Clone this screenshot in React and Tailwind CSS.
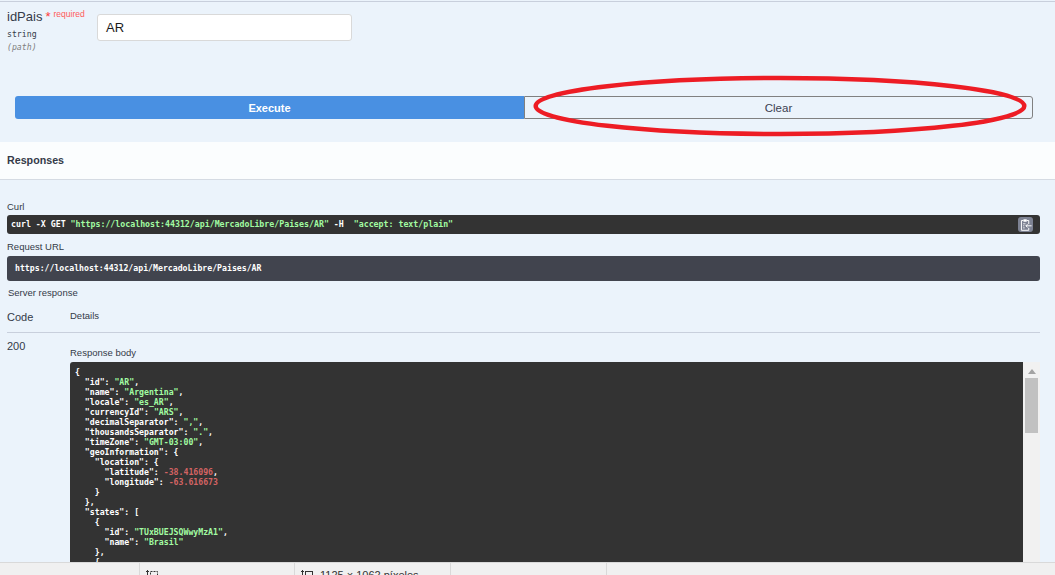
const mono = "font-['DejaVu_Sans_Mono','Liberation_Mono',monospace]";

const Str = ({ children }) => <span className="text-[#a2fca2]">{children}</span>;
const Num = ({ children }) => <span className="text-[#d36363]">{children}</span>;

const ClipboardIcon = () => (
  <svg width="13" height="14" viewBox="0 0 16 16" fill="none" stroke="#ffffff" strokeWidth="1.2">
    <path d="M5.5 2.5H3v12h9v-3" />
    <path d="M12 7V2.5H9.5" />
    <rect x="5.5" y="1" width="4" height="3" fill="#ffffff" stroke="none" />
    <path d="M15.5 9H8.5M10.5 7L8.5 9l2 2" />
    <path d="M5 6.5h3M5 9h1.5M5 11.5h2" strokeWidth="1" />
  </svg>
);

const App = () => {
  return (
    <div className="relative flex h-[575px] w-[1055px] flex-col overflow-hidden bg-[#ebf3fb] font-['Liberation_Sans',Arial,sans-serif] text-[#343a48]">
      {/* parameter row */}
      <div className="mt-px h-[95px] border-t border-[#c8cfdc] pl-[7px] pt-[7px]">
        <div className="flex">
          <div className="w-[90px]">
            <div className="flex items-start text-[13px] leading-[16px]">
              idPais
              <span className="ml-[3px] text-[#ff3b3b]">*</span>
              <span className="ml-[3px] text-[8.5px] leading-[10px] text-[#ff5a5a]">required</span>
            </div>
            <div className={`${mono} mt-[3px] text-[8.2px] leading-[13px]`}>string</div>
            <div className={`${mono} text-[8.2px] leading-[13px] text-[#808080] italic`}>(path)</div>
          </div>
          <div className="mt-[5px] flex h-[27px] w-[255px] items-center rounded-[3px] border border-[#d9d9d9] bg-white pl-2 text-[13px] text-[#1b1b1b]">
            AR
          </div>
        </div>
      </div>

      {/* execute / clear */}
      <div className="flex h-[23px] pl-[15px] pr-[22px]">
        <button className="w-[509px] rounded-l-[3px] bg-[#4990e2] pt-px text-[11px] font-bold text-white">Execute</button>
        <button className="flex-1 rounded-r-[3px] border border-[#808080] pt-[2px] text-[11.5px] text-[#3b4151]">Clear</button>
      </div>

      {/* responses header */}
      <div className="mt-[23px] flex h-[38px] items-center border-b border-[#d5dbe3] bg-[#fbfdfe] pl-[7px] text-[10.7px] font-bold">
        Responses
      </div>

      <div className="flex min-h-0 flex-1 flex-col px-[15px] pl-[7px]">
        <div className="mt-[21px] text-[9.5px] leading-[12px]">Curl</div>
        <div className={`${mono} mt-[2px] flex h-[19px] items-center justify-between rounded-[3px] bg-[#333333] pr-[7px] pl-1 text-[8.25px] font-bold text-white`}>
          <span className="whitespace-pre">
            curl -X GET <Str>"https://localhost:44312/api/MercadoLibre/Paises/AR"</Str> -H  <Str>"accept: text/plain"</Str>
          </span>
          <span className="flex size-[15px] items-center justify-center rounded-[3px] bg-[#7d8293]">
            <ClipboardIcon />
          </span>
        </div>

        <div className="mt-[7px] text-[9.5px] leading-[12px]">Request URL</div>
        <div className={`${mono} mt-[3px] flex h-[25px] items-center rounded-[3px] bg-[#41444e] pl-2 text-[8.2px] font-bold text-white`}>
          https://localhost:44312/api/MercadoLibre/Paises/AR
        </div>

        <div className="mt-[6px] pl-px text-[9.5px] leading-[12px]">Server response</div>

        <div className="mt-[11px] flex h-[23px] border-b border-[#c8cfdc] pb-[5px]">
          <div className="w-[63px] text-[11px] leading-[14px]">Code</div>
          <div className="text-[9.5px] leading-[12px]">Details</div>
        </div>

        <div className="flex min-h-0 flex-1">
          <div className="mt-[6px] w-[63px] text-[11px] leading-[14px]">200</div>
          <div className="flex min-h-0 flex-1 flex-col">
            <div className="mt-[14px] text-[9.5px] leading-[12px]">Response body</div>
            <div className="mt-[3px] flex min-h-0 flex-1">
              <pre className={`${mono} min-w-0 flex-1 overflow-hidden rounded-tl-[3px] bg-[#333333] pt-[5px] pl-[5px] text-[8.2px] leading-[10px] font-bold text-white`}>
                {'{\n  "id": '}<Str>"AR"</Str>{',\n  "name": '}<Str>"Argentina"</Str>{',\n  "locale": '}<Str>"es_AR"</Str>{',\n  "currencyId": '}<Str>"ARS"</Str>{',\n  "decimalSeparator": '}<Str>","</Str>{',\n  "thousandsSeparator": '}<Str>"."</Str>{',\n  "timeZone": '}<Str>"GMT-03:00"</Str>{',\n  "geoInformation": {\n    "location": {\n      "latitude": '}<Num>-38.416096</Num>{',\n      "longitude": '}<Num>-63.616673</Num>{'\n    }\n  },\n  "states": [\n    {\n      "id": '}<Str>"TUxBUEJSQWwyMzA1"</Str>{',\n      "name": '}<Str>"Brasil"</Str>{'\n    },\n    {'}
              </pre>
              <div className="flex w-[17px] flex-col items-center bg-[#f1f1f1]">
                <svg width="8" height="5" viewBox="0 0 8 5" className="mt-[7px]">
                  <path d="M4 0l4 5H0z" fill="#a3a3a3" />
                </svg>
                <div className="mt-[4px] h-[55px] w-[13px] self-center bg-[#c1c1c1]" />
              </div>
            </div>
          </div>
        </div>
      </div>

      {/* windows status bar across the bottom */}
      <div className="flex h-[13px] overflow-hidden border-t border-[#d9d9d9] bg-[#f0f0f0] text-[11px] leading-[13px] text-[#333333]">
        <div className="w-[140px] border-r border-[#d9d9d9]" />
        <div className="w-[155px] border-r border-[#d9d9d9] pt-[6px] pl-[5px]">
          <svg width="14" height="12" viewBox="0 0 14 12" fill="none" stroke="#333333">
            <path d="M2.5 1v9M1 2.5h3" />
            <rect x="5.5" y="2.5" width="7" height="8" strokeDasharray="2 1" />
          </svg>
        </div>
        <div className="flex w-[156px] border-r border-[#d9d9d9] pt-[6px] pl-[5px]">
          <svg width="14" height="12" viewBox="0 0 14 12" fill="none" stroke="#333333" className="shrink-0">
            <path d="M2.5 1v9M1 2.5h3" />
            <rect x="5.5" y="2.5" width="7" height="8" />
          </svg>
          <span className="ml-[6px] whitespace-nowrap">1125 × 1062 píxeles</span>
        </div>
        <div className="w-[156px] border-r border-[#d9d9d9]" />
      </div>

      {/* hand drawn annotation over the clear button */}
      <svg width="500" height="62" viewBox="0 0 500 62" className="pointer-events-none absolute top-[75px] left-[530px]">
        <ellipse cx="250" cy="31" rx="244.3" ry="28" fill="none" stroke="#ed1c24" strokeWidth="4.5" />
      </svg>
    </div>
  );
};

export default App;
